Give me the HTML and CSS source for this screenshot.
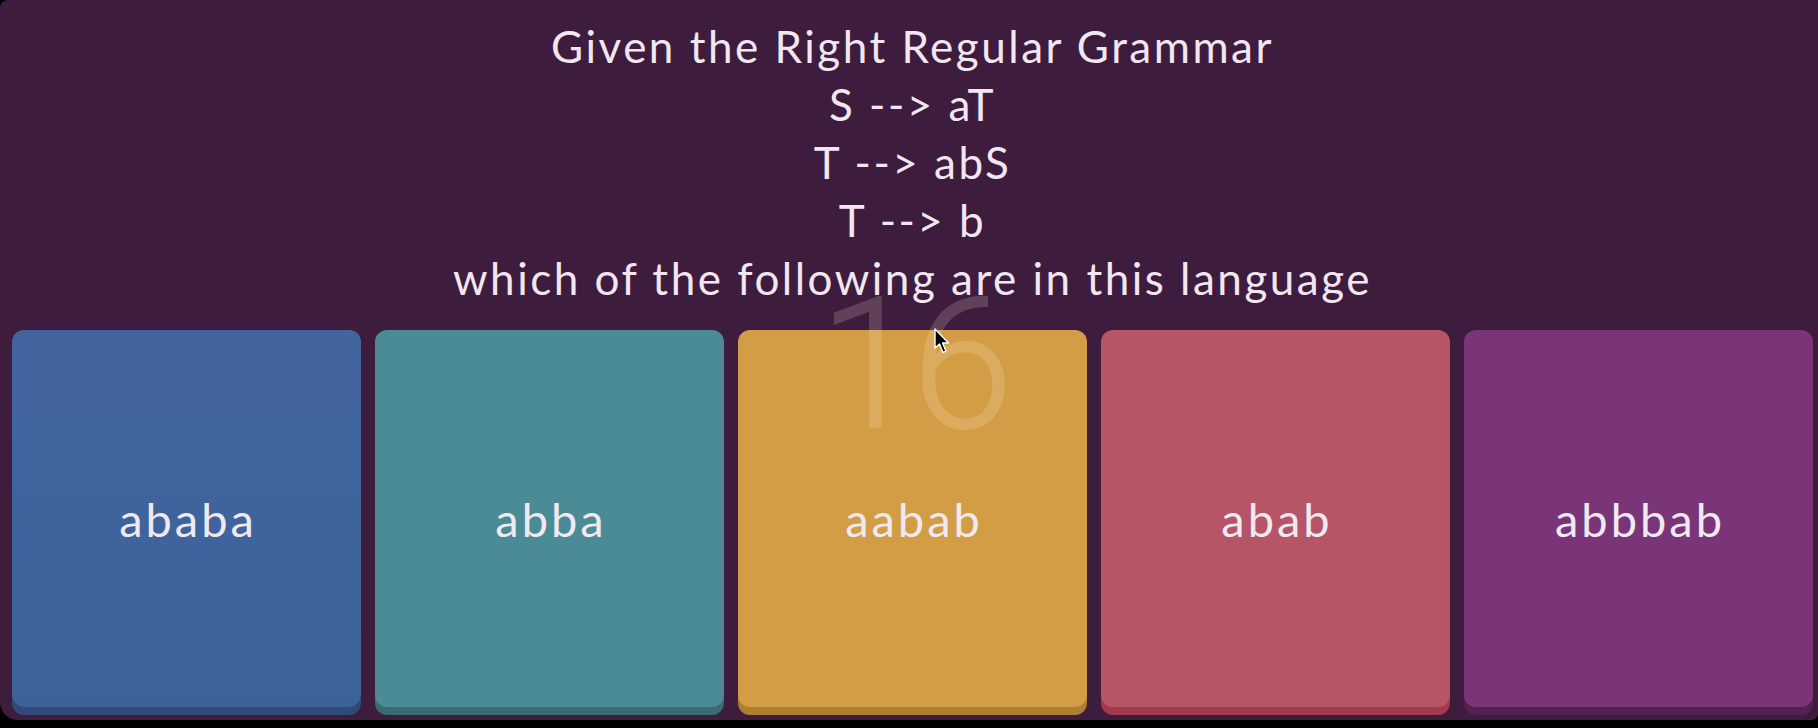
FILE: index.html
```html
<!DOCTYPE html>
<html lang="en">
<head>
<meta charset="utf-8">
<title>Quiz</title>
<link rel="stylesheet" href="styles.css">
</head>
<body>
<main class="panel">
  <div class="question">
    <div>Given the Right Regular Grammar</div>
    <div>S --&gt; aT</div>
    <div>T --&gt; abS</div>
    <div>T --&gt; b</div>
    <div>which of the following are in this language</div>
  </div>
  <div class="choices">
    <button class="card blue">ababa</button>
    <button class="card teal">abba</button>
    <button class="card yellow">aabab</button>
    <button class="card red">abab</button>
    <button class="card purple">abbbab</button>
  </div>
  <div class="timer">16</div>
  <svg class="cursor" width="18" height="27" viewBox="0 0 18 27" aria-hidden="true">
    <path d="M1 1 L1 20 L5.5 16 L9 24.5 L12 23.2 L8.6 15 L14.5 15 Z" fill="#000" stroke="#fff" stroke-width="1.4" stroke-linejoin="round"/>
  </svg>
</main>
</body>
</html>
```

FILE: styles.css
```css
html, body {
  margin: 0;
  padding: 0;
  background: #000;
}

body {
  width: 1818px;
  height: 728px;
  overflow: hidden;
  font-family: Lato, "Open Sans", "Noto Sans", sans-serif;
}

.panel {
  position: relative;
  box-sizing: border-box;
  height: 720px;
  background: #3d1c3d;
  border-radius: 8px 0 6px 18px;
  padding: 17px 5px 0 12px;
  display: flex;
  flex-direction: column;
}

.question {
  text-align: center;
  color: #f2e7f1;
  font-size: 44px;
  line-height: 58px;
  letter-spacing: 2.5px;
}

.choices {
  margin-top: 23px;
  display: grid;
  grid-template-columns: repeat(5, 1fr);
  gap: 14px;
  height: 377px;
}

.card {
  border: none;
  border-radius: 12px;
  font-family: inherit;
  font-size: 47px;
  letter-spacing: 3px;
  color: #f0e9f1;
  display: flex;
  align-items: center;
  justify-content: center;
  padding: 0 0 0 3px;
  margin: 0;
}

.blue {
  background: linear-gradient(#4265a0, #3c6399);
  box-shadow: 0 8px 0 #30497a;
}

.teal {
  background: #4b8b96;
  box-shadow: 0 8px 0 #3b6b72;
}

.yellow {
  background: #d39d46;
  box-shadow: 0 8px 0 #ae7e33;
}

.red {
  background: #b65566;
  box-shadow: 0 8px 0 #a23a4b;
}

.purple {
  background: #7a3579;
  box-shadow: 0 8px 0 #552150;
}

.timer {
  position: absolute;
  left: 912px;
  top: 274px;
  transform: translateX(-50%);
  font-family: Roboto, Inter, "Noto Sans", sans-serif;
  font-size: 182px;
  font-weight: 300;
  line-height: 1;
  letter-spacing: -8px;
  color: #ffebd2;
  -webkit-text-stroke: 2px #ffebd2;
  opacity: 0.18;
  pointer-events: none;
}

.cursor {
  position: absolute;
  left: 934px;
  top: 328px;
}
```
